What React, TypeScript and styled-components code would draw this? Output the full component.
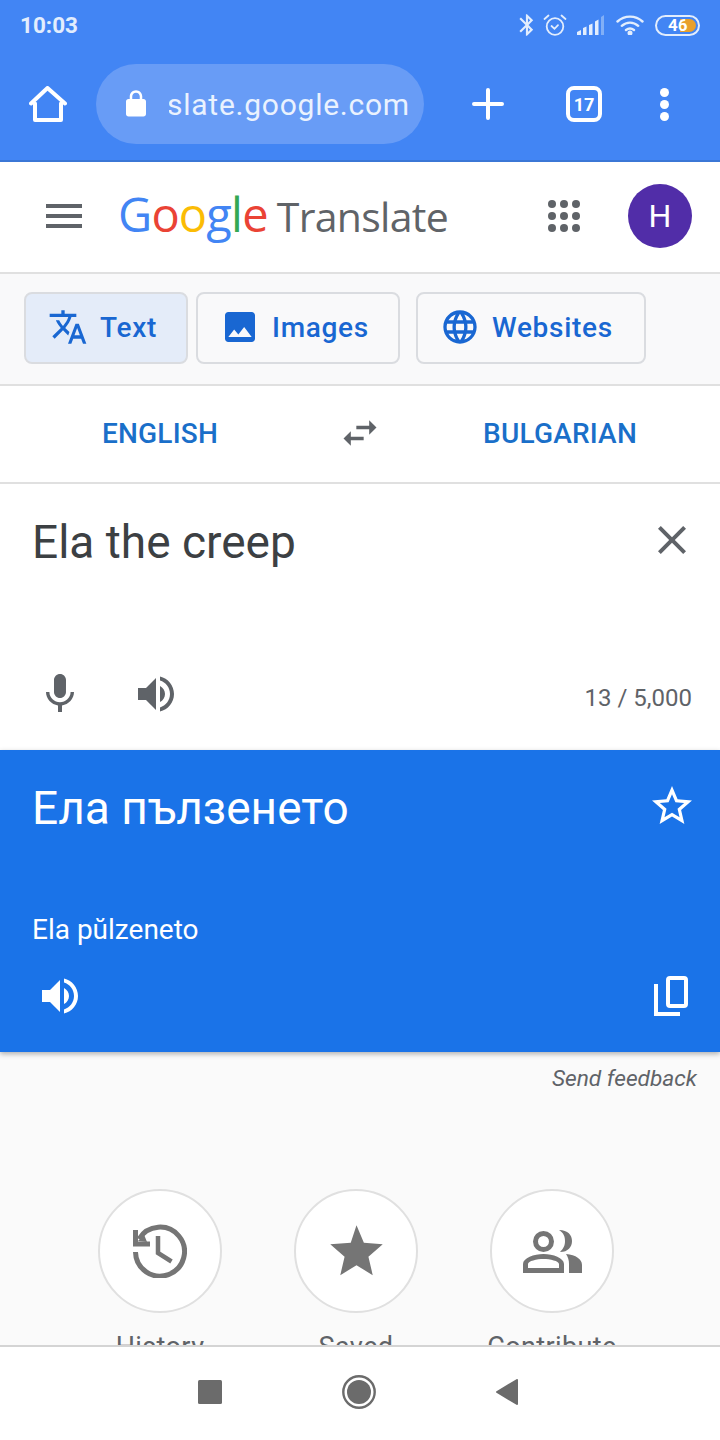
import React from "react";
import styled, { createGlobalStyle } from "styled-components";

const GlobalStyle = createGlobalStyle`
  html, body {
    margin: 0;
    padding: 0;
    background: #fff;
  }
  * {
    box-sizing: border-box;
  }
`;

const Screen = styled.div`
  width: 720px;
  height: 1440px;
  display: flex;
  flex-direction: column;
  overflow: hidden;
  font-family: Roboto, "Liberation Sans", sans-serif;
  background: #fff;
`;

const BrowserChrome = styled.header`
  height: 162px;
  flex: none;
  background: #4285f4;
  border-bottom: 2px solid #3b77d6;
`;

const StatusBar = styled.div`
  height: 50px;
  display: flex;
  align-items: center;
  padding: 0 20px 0 20px;
  color: #e2edfd;
`;

const Clock = styled.span`
  font-size: 22.5px;
  font-weight: 700;
  margin-right: auto;
`;

const StatusIcons = styled.div`
  display: flex;
  align-items: center;
`;

const Battery = styled.span`
  position: relative;
  width: 45px;
  height: 21px;
  margin-left: 11px;
  border: 2px solid #e2edfd;
  border-radius: 11px;
  font-size: 17px;
  font-weight: 700;
  line-height: 17px;
  text-align: left;
  padding-left: 11px;
  color: #fff;

  &::before {
    content: "";
    position: absolute;
    left: 23px;
    top: 2px;
    width: 16px;
    height: 13px;
    border-radius: 0 7px 7px 0;
    background: #e8a02c;
  }
`;

const BatteryValue = styled.span`
  position: relative;
`;

const Toolbar = styled.div`
  height: 110px;
  display: flex;
  align-items: center;
  padding: 14px 0 16px 29px;
`;

const AddressPill = styled.div`
  width: 328px;
  height: 80px;
  margin-left: 29px;
  border-radius: 40px;
  background: #689cf6;
  display: flex;
  align-items: center;
  padding-left: 25px;
`;

const AddressText = styled.span`
  width: 241px;
  margin-left: 18px;
  overflow: hidden;
  font-size: 30px;
  letter-spacing: 0.75px;
  text-indent: -2px;
  white-space: nowrap;
  color: #eaf2fe;
`;

const ToolbarIcons = styled.div`
  display: flex;
  align-items: center;
  height: 80px;
  margin-left: 48px;
`;

const TabCount = styled.span`
  width: 36px;
  height: 36px;
  margin-left: 62px;
  border: 4px solid #fff;
  border-radius: 8px;
  display: flex;
  align-items: center;
  justify-content: center;
  font-size: 18px;
  font-weight: 700;
  color: #fff;
`;

const MoreDots = styled.div`
  margin-left: 58px;
  display: flex;
  flex-direction: column;
  gap: 3px;
`;

const MoreDot = styled.span`
  width: 9px;
  height: 9px;
  border-radius: 50%;
  background: #fff;
`;

const AppHeader = styled.div`
  height: 112px;
  flex: none;
  display: flex;
  align-items: center;
  padding: 0 28px 2px 46px;
  background: #fff;
  border-bottom: 2px solid #e0e0e0;
`;

const Hamburger = styled.div`
  width: 36px;
  height: 24px;
  display: flex;
  flex-direction: column;
  justify-content: space-between;
`;

const HamburgerLine = styled.span`
  height: 4px;
  background: #5f6368;
`;

const Logo = styled.div`
  margin: 0 0 4px 36px;
  display: flex;
  align-items: baseline;
  font-family: "Open Sans", Roboto, sans-serif;
  font-size: 41px;
`;

const LogoLetter = styled.span<{ $color: string }>`
  color: ${({ $color }) => $color};
  font-size: 47px;
  font-weight: 500;
  letter-spacing: -0.8px;
`;

const LogoName = styled.span`
  margin-left: 9px;
  color: #5f6368;
  letter-spacing: -0.7px;
`;

const AppGrid = styled.div`
  margin-left: auto;
  display: grid;
  grid-template-columns: repeat(3, 8px);
  gap: 4px;
`;

const AppGridDot = styled.span`
  width: 8px;
  height: 8px;
  border-radius: 50%;
  background: #5f6368;
`;

const Avatar = styled.div`
  width: 64px;
  height: 64px;
  margin-left: 48px;
  border-radius: 50%;
  background: #512da8;
  color: #fff;
  display: flex;
  align-items: center;
  justify-content: center;
  font-size: 32px;
`;

const ModeBar = styled.div`
  height: 112px;
  flex: none;
  display: flex;
  align-items: center;
  padding: 0 0 2px 24px;
  background: #f9f9fa;
  border-bottom: 2px solid #e0e0e0;
`;

const ModeButton = styled.div<{ $active?: boolean; $width: number; $gap: number }>`
  width: ${({ $width }) => $width}px;
  height: 72px;
  margin-right: ${({ $gap }) => $gap}px;
  display: flex;
  align-items: center;
  gap: 12px;
  padding: 0 0 2px 22px;
  border: 2px solid #dadce0;
  border-radius: 8px;
  background: ${({ $active }) => ($active ? "#e4ecf9" : "#f9f9fa")};
  color: #1967d2;
  font-size: 28px;
  font-weight: 500;
  letter-spacing: 0.7px;
`;

const LanguageRow = styled.div`
  height: 98px;
  flex: none;
  display: grid;
  grid-template-columns: 320px 80px 320px;
  align-items: center;
  justify-items: center;
  padding-bottom: 2px;
  background: #fff;
  border-bottom: 2px solid #e0e0e0;
`;

const LanguageName = styled.span`
  font-size: 28px;
  font-weight: 500;
  letter-spacing: 0.2px;
  color: #1a6fc9;
`;

const InputPanel = styled.section`
  height: 266px;
  flex: none;
  display: flex;
  flex-direction: column;
  padding: 28px 28px 0 32px;
  background: #fff;
`;

const PanelRow = styled.div`
  display: flex;
  align-items: flex-start;
  justify-content: space-between;
`;

const PanelAction = styled.div`
  margin: 4px -4px 0 0;
`;

const SourceText = styled.div`
  font-size: 46px;
  line-height: 60px;
  color: #3c4043;
`;

const InputTools = styled.div`
  margin-top: auto;
  margin-bottom: 32px;
  display: flex;
  align-items: center;
  gap: 48px;
  margin-left: 4px;
`;

const CharCount = styled.span`
  margin-left: auto;
  padding-top: 8px;
  font-size: 24px;
  color: #5f6368;
`;

const ResultPanel = styled.section`
  position: relative;
  height: 302px;
  flex: none;
  display: flex;
  flex-direction: column;
  padding: 28px 28px 0 32px;
  background: #1a73e8;
  box-shadow: 0 2px 5px rgba(0, 0, 0, 0.3);
  color: #fff;
`;

const TranslatedText = styled.div`
  font-size: 46px;
  line-height: 60px;
`;

const Romanization = styled.div`
  margin-top: 74px;
  font-size: 28px;
  line-height: 36px;
`;

const ResultTools = styled.div`
  margin-top: 24px;
  display: flex;
  align-items: center;
  justify-content: space-between;
  padding: 0 4px 0 4px;
`;

const Lower = styled.main`
  flex: 1;
  min-height: 0;
  overflow: hidden;
  background: #fafafa;
`;

const FeedbackLink = styled.div`
  padding: 13px 23px 0 0;
  text-align: right;
  font-size: 22.7px;
  line-height: 28px;
  font-style: italic;
  color: #5f6368;
`;

const ShortcutRow = styled.div`
  display: flex;
  margin-top: 96px;
  padding-left: 62px;
`;

const Shortcut = styled.div`
  width: 196px;
  display: flex;
  flex-direction: column;
  align-items: center;
`;

const ShortcutCircle = styled.div`
  width: 124px;
  height: 124px;
  border-radius: 50%;
  border: 2px solid #e0e0e0;
  background: #fff;
  display: flex;
  align-items: center;
  justify-content: center;
`;

const ShortcutLabel = styled.span`
  margin-top: 19px;
  font-size: 27px;
  line-height: 30px;
  letter-spacing: 0.4px;
  color: #5f6368;
`;

const NavBar = styled.nav`
  height: 95px;
  flex: none;
  display: flex;
  align-items: center;
  justify-content: center;
  gap: 120px;
  padding: 0 4px 3px 0;
  background: #fff;
  border-top: 2px solid #d4d4d4;
`;

const IconSvg = styled.svg`
  display: block;
  flex: none;
`;

const BluetoothSlot = styled.span`
  display: block;
  margin-right: -7px;
`;

type IconProps = { size?: number; color?: string; d: string };

const MaterialIcon = ({ size = 48, color = "#5f6368", d }: IconProps) => (
  <IconSvg width={size} height={size} viewBox="0 0 24 24" fill={color}>
    <path d={d} />
  </IconSvg>
);

const PATHS = {
  lock: "M18 8h-1V6c0-2.76-2.24-5-5-5S7 3.24 7 6v2H6c-1.1 0-2 .9-2 2v10c0 1.1.9 2 2 2h12c1.1 0 2-.9 2-2V10c0-1.1-.9-2-2-2zM9 6c0-1.66 1.34-3 3-3s3 1.34 3 3v2H9V6z",
  translate:
    "M12.87 15.07l-2.54-2.51.03-.03c1.74-1.94 2.98-4.17 3.71-6.53H17V4h-7V2H8v2H1v1.99h11.17C11.5 7.92 10.44 9.75 9 11.35 8.07 10.32 7.3 9.19 6.69 8h-2c.73 1.63 1.73 3.17 2.98 4.56l-5.09 5.02L4 19l5-5 3.11 3.11.76-2.04zM18.5 10h-2L12 22h2l1.12-3h4.75L21 22h2l-4.5-12zm-2.62 7l1.62-4.33L19.12 17h-3.24z",
  image:
    "M21 19V5c0-1.1-.9-2-2-2H5c-1.1 0-2 .9-2 2v14c0 1.1.9 2 2 2h14c1.1 0 2-.9 2-2zM8.5 13.5l2.5 3.01L14.5 12l4.5 6H5l3.5-4.5z",
  language:
    "M11.99 2C6.47 2 2 6.48 2 12s4.47 10 9.99 10C17.52 22 22 17.52 22 12S17.52 2 11.99 2zm6.93 6h-2.95c-.32-1.25-.78-2.45-1.38-3.56 1.84.63 3.37 1.91 4.33 3.56zM12 4.04c.83 1.2 1.48 2.53 1.91 3.96h-3.82c.43-1.43 1.08-2.76 1.91-3.96zM4.26 14C4.1 13.36 4 12.69 4 12s.1-1.36.26-2h3.38c-.08.66-.14 1.32-.14 2 0 .68.06 1.34.14 2H4.26zm.82 2h2.95c.32 1.25.78 2.45 1.38 3.56-1.84-.63-3.37-1.9-4.33-3.56zm2.95-8H5.08c.96-1.66 2.49-2.93 4.33-3.56C8.81 5.55 8.35 6.75 8.03 8zM12 19.96c-.83-1.2-1.48-2.53-1.91-3.96h3.82c-.43 1.43-1.08 2.76-1.91 3.96zM14.34 14H9.66c-.09-.66-.16-1.32-.16-2 0-.68.07-1.35.16-2h4.68c.09.65.16 1.32.16 2 0 .68-.07 1.34-.16 2zm.25 5.56c.6-1.11 1.06-2.31 1.38-3.56h2.95c-.96 1.65-2.49 2.93-4.33 3.56zM16.36 14c.08-.66.14-1.32.14-2 0-.68-.06-1.34-.14-2h3.38c.16.64.26 1.31.26 2s-.1 1.36-.26 2h-3.38z",
  swap: "M6.99 11L3 15l3.99 4v-3H14v-2H6.99v-3zM21 9l-3.99-4v3H10v2h7.01v3L21 9z",
  close:
    "M19 6.41L17.59 5 12 10.59 6.41 5 5 6.41 10.59 12 5 17.59 6.41 19 12 13.41 17.59 19 19 17.59 13.41 12z",
  mic: "M12 14c1.66 0 2.99-1.34 2.99-3L15 5c0-1.66-1.34-3-3-3S9 3.34 9 5v6c0 1.66 1.34 3 3 3zm5.3-3c0 3-2.54 5.1-5.3 5.1S6.7 14 6.7 11H5c0 3.41 2.72 6.23 6 6.72V21h2v-3.28c3.28-.48 6-3.3 6-6.72h-1.7z",
  volume:
    "M3 9v6h4l5 5V4L7 9H3zm13.5 3c0-1.77-1.02-3.29-2.5-4.03v8.05c1.48-.73 2.5-2.25 2.5-4.02zM14 3.23v2.06c2.89.86 5 3.54 5 6.71s-2.11 5.85-5 6.71v2.06c4.01-.91 7-4.49 7-8.77s-2.99-7.86-7-8.77z",
  starBorder:
    "M22 9.24l-7.19-.62L12 2 9.19 8.63 2 9.24l5.46 4.73L5.82 21 12 17.27 18.18 21l-1.63-7.03L22 9.24zM12 15.4l-3.76 2.27 1-4.28-3.32-2.88 4.38-.38L12 6.1l1.71 4.04 4.38.38-3.32 2.88 1 4.28L12 15.4z",
  star: "M12 17.27L18.18 21l-1.64-7.03L22 9.24l-7.19-.61L12 2 9.81 8.63 2 9.24l5.46 4.73L5.82 21z",
  bluetooth:
    "M17.71 7.71L12 2h-1v7.59L6.41 5 5 6.41 10.59 12 5 17.59 6.41 19 11 14.41V22h1l5.71-5.71-4.3-4.29 4.3-4.29zM13 5.83l1.88 1.88L13 9.59V5.83zm1.88 10.46L13 18.17v-3.76l1.88 1.88z",
};

const STATUS = "#e2edfd";

const AlarmIcon = () => (
  <IconSvg width={24} height={22} viewBox="0 0 24 22" fill="none" stroke={STATUS} strokeWidth={1.8} strokeLinecap="round" style={{ marginLeft: 10 }}>
    <circle cx={12} cy={12.5} r={8.3} />
    <path d="M8.5 12l3 2.8 3.5-3.6M1.5 5L5.5 1.5M22.5 5l-4-3.5" />
  </IconSvg>
);

const SignalIcon = () => (
  <IconSvg width={27} height={20} viewBox="0 0 27 20" fill={STATUS} style={{ marginLeft: 10 }}>
    <path d="M0 20v-3l4-2v5zM6 20v-7l3.5-1.5V20zM12 20V10l3.5-1.5V20zM18 20V6.500l3.500-2V20z" />
    <path d="M24 20V2l3-2v20z" opacity={0.4} />
  </IconSvg>
);

const WifiIcon = () => (
  <IconSvg width={28} height={20} viewBox="0 0 28 20" fill="none" stroke={STATUS} strokeWidth={2.4} strokeLinecap="round" style={{ marginLeft: 12 }}>
    <path d="M1.500 6.500C8.500 0 19.500 0 26.500 6.500M5.800 10.800c4.800-4.300 11.600-4.300 16.400 0M10 15c2.500-2 5.500-2 8 0" />
    <circle cx={14} cy={18} r={1.300} fill={STATUS} />
  </IconSvg>
);

const HomeIcon = () => (
  <IconSvg width={38} height={36} viewBox="0 0 38 36" fill="none" stroke="#fff" strokeWidth={4} strokeLinejoin="round" strokeLinecap="round">
    <path d="M2 17.500L18.500 2 36 17.500M6 17.500V34H32V17.500" />
  </IconSvg>
);

const PlusIcon = () => (
  <IconSvg width={32} height={32} viewBox="0 0 32 32" stroke="#fff" strokeWidth={4} strokeLinecap="round">
    <path d="M16 2V30M2 16H30" />
  </IconSvg>
);

const CopyIcon = () => (
  <IconSvg width={34} height={40} viewBox="0 0 34 40" fill="none" stroke="#fff" strokeWidth={4}>
    <rect x={14} y={2} width={18} height={28} rx={2} />
    <path d="M2 8V38H26" />
  </IconSvg>
);

const HistoryIcon = () => (
  <IconSvg width={54} height={54} viewBox="0 0 54 54" fill="none" stroke="#757575" strokeWidth={5}>
    <path d="M2.500 28A24.500 24.500 0 1 0 6 15" />
    <path d="M2.500 6V20H17" />
    <path d="M5 17L11 10.500L14 18z" fill="#757575" stroke="none" />
    <path d="M25 12V29L38.500 37.500" strokeWidth={4.500} />
  </IconSvg>
);

const PeopleIcon = () => (
  <IconSvg width={59} height={43} viewBox="0 0 59 43" fill="#757575">
    <path fillRule="evenodd" d="M20.500 1a10.500 10.500 0 1 0 0 21a10.500 10.500 0 0 0 0-21zm0 5a5.500 5.500 0 1 1 0 11a5.500 5.500 0 0 1 0-11z" />
    <path fillRule="evenodd" d="M0 43V34C0 28 11 24 20.500 24S41 28 41 34V43zM5 38H36V34C36 31 27 29 20.500 29S5 31 5 34z" />
    <path d="M36 0C45 0 49 5 49 11S45 22 37 22C41 18 42 15 42 11S41 3 36 0z" />
    <path d="M43 24C53 25 59 29 59 35V43H46V34C46 30 45 27 43 24z" />
  </IconSvg>
);

const LOGO_LETTERS = [
  ["G", "#4285f4"],
  ["o", "#ea4335"],
  ["o", "#fbbc05"],
  ["g", "#4285f4"],
  ["l", "#34a853"],
  ["e", "#ea4335"],
];

const App = () => (
  <Screen>
    <GlobalStyle />
    <BrowserChrome>
      <StatusBar>
        <Clock>10:03</Clock>
        <StatusIcons>
          <BluetoothSlot>
            <MaterialIcon size={26} color={STATUS} d={PATHS.bluetooth} />
          </BluetoothSlot>
          <AlarmIcon />
          <SignalIcon />
          <WifiIcon />
          <Battery>
            <BatteryValue>46</BatteryValue>
          </Battery>
        </StatusIcons>
      </StatusBar>
      <Toolbar>
        <HomeIcon />
        <AddressPill>
          <MaterialIcon size={30} color="#fff" d={PATHS.lock} />
          <AddressText>slate.google.com</AddressText>
        </AddressPill>
        <ToolbarIcons>
          <PlusIcon />
          <TabCount>17</TabCount>
          <MoreDots>
            <MoreDot />
            <MoreDot />
            <MoreDot />
          </MoreDots>
        </ToolbarIcons>
      </Toolbar>
    </BrowserChrome>

    <AppHeader>
      <Hamburger>
        <HamburgerLine />
        <HamburgerLine />
        <HamburgerLine />
      </Hamburger>
      <Logo>
        {LOGO_LETTERS.map(([letter, color], i) => (
          <LogoLetter key={i} $color={color}>
            {letter}
          </LogoLetter>
        ))}
        <LogoName>Translate</LogoName>
      </Logo>
      <AppGrid>
        {Array.from({ length: 9 }).map((_, i) => (
          <AppGridDot key={i} />
        ))}
      </AppGrid>
      <Avatar>H</Avatar>
    </AppHeader>

    <ModeBar>
      <ModeButton $active $width={164} $gap={8}>
        <MaterialIcon size={40} color="#1967d2" d={PATHS.translate} />
        Text
      </ModeButton>
      <ModeButton $width={204} $gap={16}>
        <MaterialIcon size={40} color="#1967d2" d={PATHS.image} />
        Images
      </ModeButton>
      <ModeButton $width={230} $gap={0}>
        <MaterialIcon size={40} color="#1967d2" d={PATHS.language} />
        Websites
      </ModeButton>
    </ModeBar>

    <LanguageRow>
      <LanguageName>ENGLISH</LanguageName>
      <MaterialIcon size={44} d={PATHS.swap} />
      <LanguageName>BULGARIAN</LanguageName>
    </LanguageRow>

    <InputPanel>
      <PanelRow>
        <SourceText>Ela the creep</SourceText>
        <PanelAction>
          <MaterialIcon d={PATHS.close} />
        </PanelAction>
      </PanelRow>
      <InputTools>
        <MaterialIcon d={PATHS.mic} />
        <MaterialIcon d={PATHS.volume} />
        <CharCount>13 / 5,000</CharCount>
      </InputTools>
    </InputPanel>

    <ResultPanel>
      <PanelRow>
        <TranslatedText>Ела пълзенето</TranslatedText>
        <PanelAction>
          <MaterialIcon color="#fff" d={PATHS.starBorder} />
        </PanelAction>
      </PanelRow>
      <Romanization>Ela pŭlzeneto</Romanization>
      <ResultTools>
        <MaterialIcon color="#fff" d={PATHS.volume} />
        <CopyIcon />
      </ResultTools>
    </ResultPanel>

    <Lower>
      <FeedbackLink>Send feedback</FeedbackLink>
      <ShortcutRow>
        <Shortcut>
          <ShortcutCircle>
            <HistoryIcon />
          </ShortcutCircle>
          <ShortcutLabel>History</ShortcutLabel>
        </Shortcut>
        <Shortcut>
          <ShortcutCircle>
            <MaterialIcon size={63} color="#757575" d={PATHS.star} />
          </ShortcutCircle>
          <ShortcutLabel>Saved</ShortcutLabel>
        </Shortcut>
        <Shortcut>
          <ShortcutCircle>
            <PeopleIcon />
          </ShortcutCircle>
          <ShortcutLabel>Contribute</ShortcutLabel>
        </Shortcut>
      </ShortcutRow>
    </Lower>

    <NavBar>
      <IconSvg width={24} height={24} viewBox="0 0 24 24" fill="#6b6b6b">
        <rect width={24} height={24} rx={1.500} />
      </IconSvg>
      <IconSvg width={34} height={34} viewBox="0 0 34 34">
        <circle cx={17} cy={17} r={15.700} fill="none" stroke="#6b6b6b" strokeWidth={2.400} />
        <circle cx={17} cy={17} r={12} fill="#6b6b6b" />
      </IconSvg>
      <IconSvg width={22} height={26} viewBox="0 0 22 26" fill="#6b6b6b" stroke="#6b6b6b" strokeWidth={2} strokeLinejoin="round">
        <path d="M21 1V25L1 13z" />
      </IconSvg>
    </NavBar>
  </Screen>
);

export default App;
